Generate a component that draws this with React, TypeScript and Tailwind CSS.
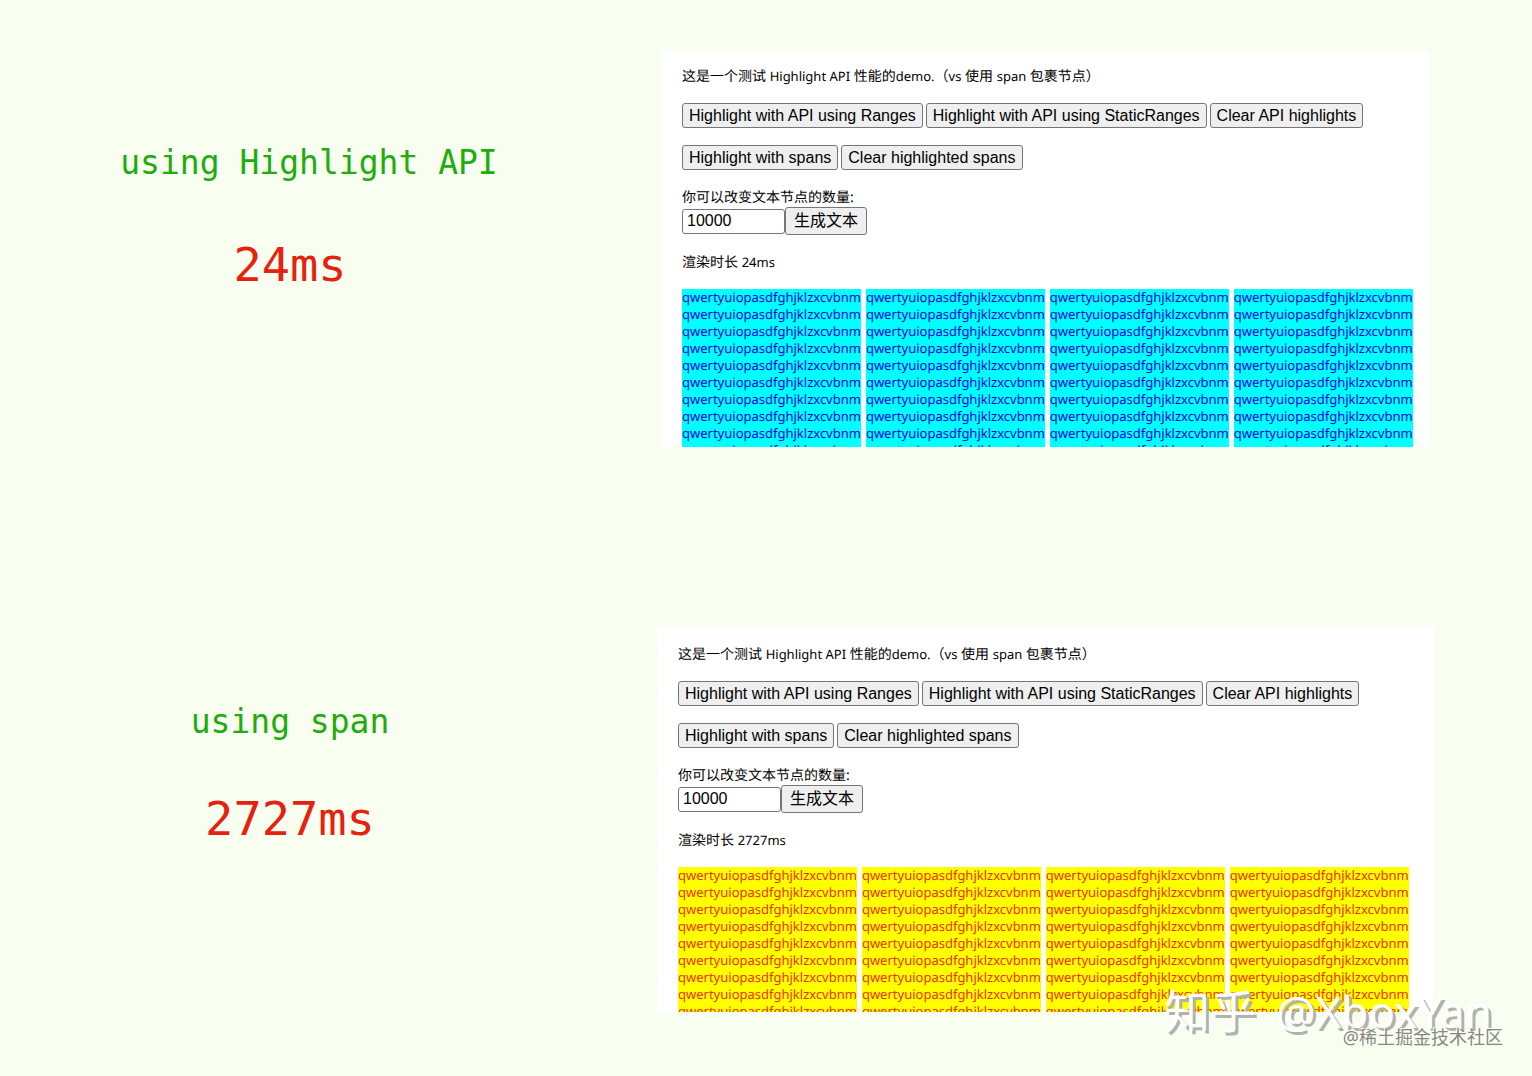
import React, { useState } from "react";

const WORD = "qwertyuiopasdfghjklzxcvbnm";
const ROWS = Array.from({ length: 10 }, (_, i) => i);
const COLUMNS = [0, 1, 2, 3];

function DemoButton({ children, className = "h-[25px] px-1.5" }: { children: React.ReactNode; className?: string }) {
  return (
    <button
      type="button"
      className={`${className} shrink-0 rounded-[3px] border border-[#767676] bg-[#efefef] text-base leading-[22px] whitespace-nowrap text-black`}
    >
      {children}
    </button>
  );
}

function Latin({ children }: { children: React.ReactNode }) {
  return <span className="text-[13px]">{children}</span>;
}

type DemoProps = {
  id: string;
  time: string;
  panelClass: string;
  listClass: string;
  wordClass: string;
};

function Demo({ id, time, panelClass, listClass, wordClass }: DemoProps) {
  const [count, setCount] = useState("10000");
  return (
    <div
      className={`${panelClass} bg-white pr-3 pl-[21px] font-['Noto_Sans','Noto_Sans_CJK_SC',sans-serif] text-sm leading-[17px] text-black [text-rendering:geometricPrecision]`}
    >
      <p className="whitespace-nowrap">
        这是一个测试 <Latin>Highlight API</Latin> 性能的<Latin>demo.</Latin>（<Latin>vs</Latin> 使用{" "}
        <Latin>span</Latin> 包裹节点）
      </p>
      <div className="mt-[18px] flex gap-[3px] font-['Liberation_Sans',sans-serif]">
        <DemoButton>Highlight with API using Ranges</DemoButton>
        <DemoButton>Highlight with API using StaticRanges</DemoButton>
        <DemoButton>Clear API highlights</DemoButton>
      </div>
      <div className="mt-[17px] flex gap-[3px] font-['Liberation_Sans',sans-serif]">
        <DemoButton>Highlight with spans</DemoButton>
        <DemoButton>Clear highlighted spans</DemoButton>
      </div>
      <label htmlFor={id} className="mt-[19px] block">
        你可以改变文本节点的数量:
      </label>
      <div className="mt-px flex items-center font-['Liberation_Sans','Noto_Sans_CJK_SC',sans-serif]">
        <input
          id={id}
          value={count}
          onChange={(e) => setCount(e.target.value)}
          className="h-[25px] w-[103px] rounded-[3px] border border-[#767676] bg-white px-1 text-base"
        />
        <DemoButton className="h-[28px] px-2">生成文本</DemoButton>
      </div>
      <p className="mt-[19px]">
        渲染时长 <Latin>{time}</Latin>
      </p>
      <div className={`${listClass} mt-[18px] flex gap-[5px] overflow-hidden text-[13px]`}>
        {COLUMNS.map((c) => (
          <ul key={c} className={`${wordClass} h-[170px] shrink-0`}>
            {ROWS.map((r) => (
              <li key={r}>{WORD}</li>
            ))}
          </ul>
        ))}
      </div>
    </div>
  );
}

export default function App() {
  return (
    <main className="relative min-h-screen overflow-hidden bg-[#f9fff0] pt-[51px]">
      <section className="grid grid-cols-[minmax(0,580fr)_minmax(0,952fr)]">
        <div className="pt-[88px] text-center font-['DejaVu_Sans_Mono',monospace]">
          <h2 className="pl-[38px] text-[33px] leading-[48px] whitespace-nowrap text-[#20ad0c]">using Highlight API</h2>
          <p className="mt-[46px] text-[47px] leading-[64px] text-[#e6220f]">24ms</p>
        </div>
        <Demo
          id="count-api"
          time="24ms"
          panelClass="mr-[102px] ml-[81px] pt-[17px]"
          listClass="h-[158px]"
          wordClass="bg-[#00ffff] text-[#0000e0]"
        />
      </section>

      <section className="mt-[179px] grid grid-cols-[minmax(0,580fr)_minmax(0,952fr)]">
        <div className="pt-[72px] text-center font-['DejaVu_Sans_Mono',monospace]">
          <h2 className="text-[33px] leading-[48px] text-[#20ad0c]">using span</h2>
          <p className="mt-[41px] text-[47px] leading-[64px] text-[#e6220f]">2727ms</p>
        </div>
        <Demo
          id="count-span"
          time="2727ms"
          panelClass="mr-[98px] ml-[77px] pt-5"
          listClass="h-[145px]"
          wordClass="bg-[#ffff00] text-[#f03000]"
        />
      </section>

      <div className="pointer-events-none absolute right-[40px] bottom-[33px] flex items-baseline gap-5 font-['Noto_Sans','Noto_Sans_CJK_SC',sans-serif] text-[46px] leading-[64px] whitespace-nowrap text-white [text-shadow:3px_3px_0_#b0b2ac]">
        <span>知乎</span>
        <span className="text-[44px]">@XboxYan</span>
      </div>
      <div className="pointer-events-none absolute right-[29px] bottom-[27px] font-['Noto_Sans','Noto_Sans_CJK_SC',sans-serif] text-[18px] leading-[24px] whitespace-nowrap text-[#858980] [text-shadow:-1px_-1px_0_#ffffff]">
        @稀土掘金技术社区
      </div>
    </main>
  );
}
